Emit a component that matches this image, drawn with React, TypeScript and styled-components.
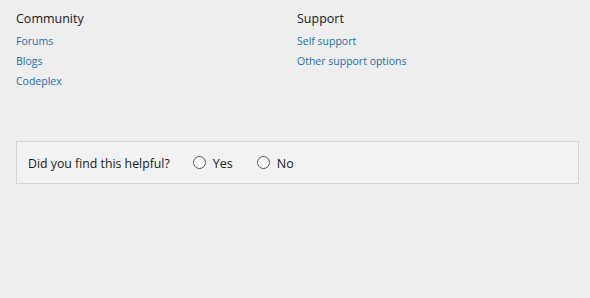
import React from 'react';
import styled, { createGlobalStyle } from 'styled-components';

const GlobalStyle = createGlobalStyle`
  html, body {
    margin: 0;
    padding: 0;
    background: #eeeeee;
    font-family: 'Open Sans', 'Noto Sans', sans-serif;
  }
`;

const Page = styled.div`
  padding: 10px 11px 0 16px;
  width: 590px;
  height: 298px;
  box-sizing: border-box;
`;

const Columns = styled.div`
  display: flex;
`;

const Column = styled.div`
  width: 281px;
  display: flex;
  flex-direction: column;
`;

const Heading = styled.h3`
  margin: 0 0 3px;
  font-size: 12.5px;
  font-weight: 400;
  color: #1a1a1a;
  line-height: 18px;
`;

const Link = styled.a`
  font-size: 10.5px;
  color: #1e6ea8;
  text-decoration: none;
  line-height: 20px;
  cursor: pointer;
`;

const Feedback = styled.div`
  margin-top: 50px;
  height: 43px;
  box-sizing: border-box;
  background: #f2f2f2;
  border: 1px solid #d4d4d4;
  display: flex;
  align-items: center;
  padding: 1px 0 0 11px;
`;

const Question = styled.span`
  font-size: 12.3px;
  color: #1a1a1a;
  margin-right: 23px;
`;

const Option = styled.label`
  display: flex;
  align-items: center;
  font-size: 12.5px;
  color: #1a1a1a;
  margin-right: 24px;
  cursor: pointer;
`;

const Radio = styled.span`
  width: 11px;
  height: 11px;
  border: 1px solid #555;
  border-radius: 50%;
  background: #fff;
  margin: -2px 7px 0 0;
`;

const community = ['Forums', 'Blogs', 'Codeplex'];
const support = ['Self support', 'Other support options'];

export default function App() {
  return (
    <>
      <GlobalStyle />
      <Page>
        <Columns>
          <Column>
            <Heading>Community</Heading>
            {community.map((item) => (
              <Link key={item}>{item}</Link>
            ))}
          </Column>
          <Column>
            <Heading>Support</Heading>
            {support.map((item) => (
              <Link key={item}>{item}</Link>
            ))}
          </Column>
        </Columns>
        <Feedback>
          <Question>Did you find this helpful?</Question>
          <Option>
            <Radio />
            Yes
          </Option>
          <Option>
            <Radio />
            No
          </Option>
        </Feedback>
      </Page>
    </>
  );
}
